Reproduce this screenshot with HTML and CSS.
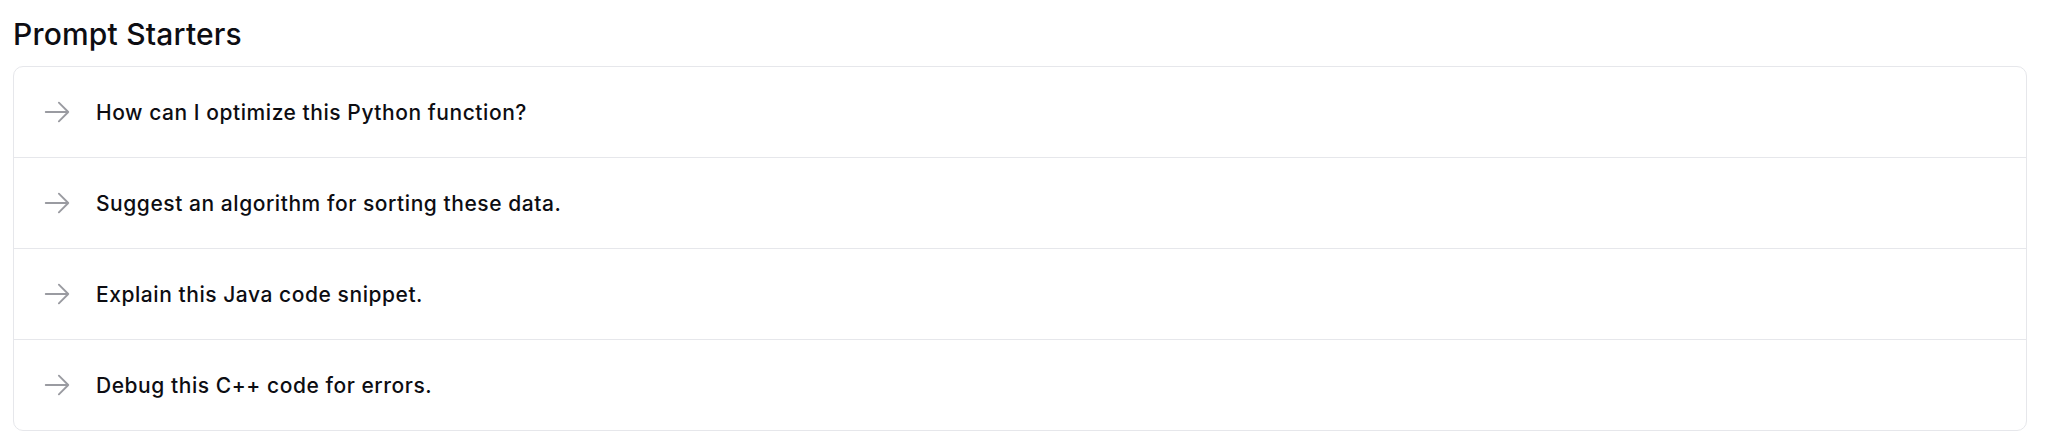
FILE: index.html
```html
<!DOCTYPE html>
<html>
    <head>
        <meta charset="UTF-8">
        <title>Prompt Starters</title>
        <link rel="stylesheet" href="styles.css">
    </head>
    <body>
        <section class="starters">
            <h2 class="startersTitle">Prompt Starters</h2>
            <ul class="starterList">
                <li class="starterItem">
                    <svg class="arrow" viewBox="0 0 24 24" fill="none" stroke="currentColor" stroke-width="1.5" stroke-linecap="round" stroke-linejoin="round"><path d="M13.5 4.5 21 12m0 0-7.5 7.5M21 12H3"/></svg>
                    <span>How can I optimize this Python function?</span>
                </li>
                <li class="starterItem">
                    <svg class="arrow" viewBox="0 0 24 24" fill="none" stroke="currentColor" stroke-width="1.5" stroke-linecap="round" stroke-linejoin="round"><path d="M13.5 4.5 21 12m0 0-7.5 7.5M21 12H3"/></svg>
                    <span>Suggest an algorithm for sorting these data.</span>
                </li>
                <li class="starterItem">
                    <svg class="arrow" viewBox="0 0 24 24" fill="none" stroke="currentColor" stroke-width="1.5" stroke-linecap="round" stroke-linejoin="round"><path d="M13.5 4.5 21 12m0 0-7.5 7.5M21 12H3"/></svg>
                    <span>Explain this Java code snippet.</span>
                </li>
                <li class="starterItem">
                    <svg class="arrow" viewBox="0 0 24 24" fill="none" stroke="currentColor" stroke-width="1.5" stroke-linecap="round" stroke-linejoin="round"><path d="M13.5 4.5 21 12m0 0-7.5 7.5M21 12H3"/></svg>
                    <span>Debug this C++ code for errors.</span>
                </li>
            </ul>
        </section>
    </body>
</html>
```

FILE: styles.css
```css
:root{
    --textDark: #0d0d12;
    --lineGray: #e6e7eb;
    --arrowGray: #9a9ba1;
}

body{
    margin: 0;
    background-color: white;
    font-family: Inter, "Noto Sans", sans-serif;
    color: var(--textDark);
}

/*---------------- 영역 ----------------*/
.starters{
    padding: 14px 21px 0 13px;
}
.startersTitle{
    margin: 0 0 12px 0;
    font-size: 30px;
    font-weight: 500;
    line-height: 40px;
    letter-spacing: 0.2px;
}

/*---------------- 목록 ----------------*/
.starterList{
    list-style: none;
    margin: 0;
    padding: 0;
    border: 1px solid var(--lineGray);
    border-radius: 10px;
}
.starterItem{
    display: flex;
    align-items: center;
    gap: 24px;
    height: 90px;
    padding-left: 28px;
    font-size: 21px;
    font-weight: 500;
    letter-spacing: 0.55px;
}
.starterItem + .starterItem{
    border-top: 1px solid var(--lineGray);
}
.arrow{
    width: 30px;
    height: 30px;
    color: var(--arrowGray);
}
```
